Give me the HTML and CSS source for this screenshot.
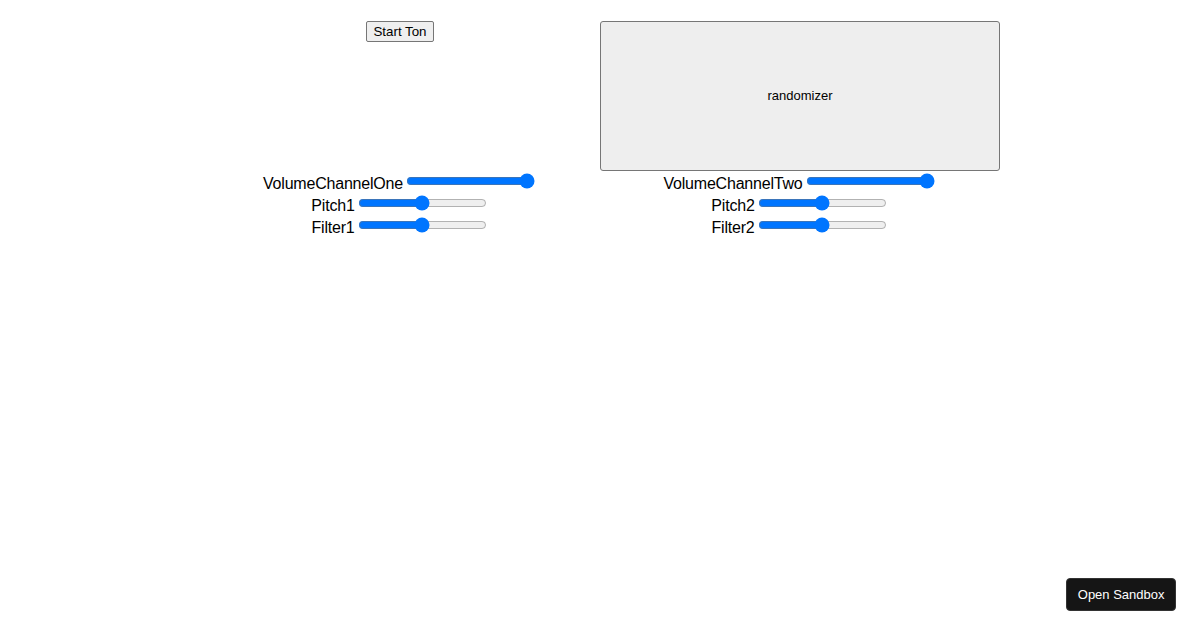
FILE: index.html
```html
<!DOCTYPE html>
<html lang="en">
<head>
    <meta charset="UTF-8">
    <meta name="viewport" content="width=device-width, initial-scale=1.0">
    <title>Synth</title>
    <link rel="stylesheet" href="styles.css">
</head>
<body>
    <div class="app">
        <div class="cell cell-start">
            <button class="start-btn">Start Ton</button>
        </div>
        <div class="cell">
            <div class="randomizer">randomizer</div>
        </div>
        <div class="cell channel">
            <div class="row"><label for="vol1">VolumeChannelOne</label><input type="range" id="vol1" min="0" max="100" value="100"></div>
            <div class="row"><label for="pitch1">Pitch1</label><input type="range" id="pitch1" min="0" max="100" value="50"></div>
            <div class="row"><label for="filter1">Filter1</label><input type="range" id="filter1" min="0" max="100" value="50"></div>
        </div>
        <div class="cell channel">
            <div class="row"><label for="vol2">VolumeChannelTwo</label><input type="range" id="vol2" min="0" max="100" value="100"></div>
            <div class="row"><label for="pitch2">Pitch2</label><input type="range" id="pitch2" min="0" max="100" value="50"></div>
            <div class="row"><label for="filter2">Filter2</label><input type="range" id="filter2" min="0" max="100" value="50"></div>
        </div>
    </div>

    <a class="sandbox-btn" href="#">Open Sandbox</a>
</body>
</html>
```

FILE: styles.css
```css
body {
    margin: 0;
    padding: 0;
    font-family: 'Liberation Sans', Arial, sans-serif;
    font-size: 16px;
    color: #000;
    background: #fff;
}

.app {
    display: grid;
    grid-template-columns: 400px 400px;
    justify-content: center;
    padding-top: 21px;
}

.cell {
    text-align: center;
}

.start-btn {
    font-family: 'Liberation Sans', Arial, sans-serif;
    font-size: 13.33px;
    height: 21px;
    padding: 1px 6px;
    background: #efefef;
    border: 1px solid #767676;
    border-radius: 2px;
    color: #000;
}

.randomizer {
    box-sizing: border-box;
    height: 150px;
    display: flex;
    align-items: center;
    justify-content: center;
    padding-bottom: 2px;
    background: #eee;
    border: 1px solid #767676;
    border-radius: 3px;
    font-size: 13px;
}

.row {
    height: 22px;
}

.row label {
    letter-spacing: -0.2px;
}

.row input {
    margin: 2px 2px 2px 3px;
}

.sandbox-btn {
    position: fixed;
    right: 24px;
    bottom: 19px;
    background: #151515;
    color: #fff;
    text-decoration: none;
    font-size: 13px;
    line-height: 15px;
    padding: 8px 10.5px;
    border-radius: 4px;
    border: 1px solid #333;
}
```
